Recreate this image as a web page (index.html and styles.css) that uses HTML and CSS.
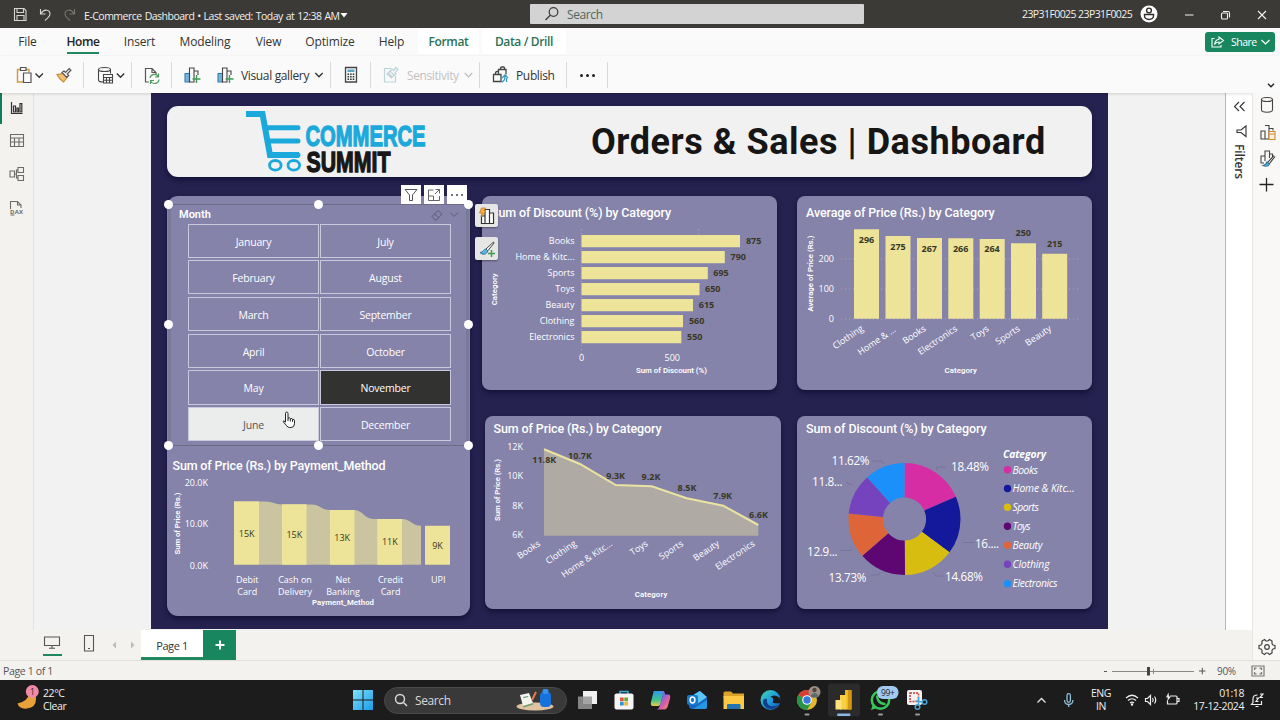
FILE: index.html
```
<!doctype html>
<html>
<head>
<meta charset="utf-8">
<title>E-Commerce Dashboard</title>
<link rel="stylesheet" href="styles.css">
</head>

<body>
<header class="titlebar">
	<svg class="title-icons" width="84" height="28" viewBox="0 0 84 28">
		<g fill="none" stroke="#d6d5d3" stroke-width="1.1">
			<path d="M14.5 8.5h9.5l2 2v10h-11.5zM17 8.5v4h6.500v-4M17 20.500v-5h7v5"/>
			<path d="M40.500 9v5h5M41 13.500c3-5 9-4 9 .500 0 2-2 4-5 6.500"/>
			<path stroke="#77756f" d="M74.500 9v5h-5M74 13.500c-3-5-9-4-9 .500 0 2 2 4 5 6.500"/>
		</g>
	</svg>
	<span class="doc-name">E-Commerce Dashboard &bull; Last saved: Today at 12:38 AM</span>
	<svg class="doc-caret" width="8" height="5" viewBox="0 0 8 5"><path fill="#fff" d="M.5 0h7L4 4.500z"/></svg>
	<div class="search">
		<svg width="16" height="16" viewBox="0 0 16 16"><g fill="none" stroke="#3b3a37" stroke-width="1.200"><circle cx="9.500" cy="6" r="4.300"/><path d="M6.500 9 1.500 14"/></g></svg>
		<span>Search</span>
	</div>
	<span class="user">23P31F0025 23P31F0025</span>
	<svg class="avatar" width="18" height="18" viewBox="0 0 18 18"><circle cx="9" cy="9" r="8.500" fill="#fff"/><g fill="none" stroke="#2e2d2b" stroke-width="1.400"><circle cx="9" cy="5.500" r="2.400"/><path d="M4.500 9.500h9v1.500c0 2-2 3.500-4.500 3.500s-4.500-1.500-4.500-3.500z"/></g></svg>
	<svg class="win-buttons" width="90" height="28" viewBox="1180 0 90 28">
		<g fill="none" stroke="#f2f2f2" stroke-width="1.100">
			<path d="M1185 15h8.500M1258 11l8 8M1266 11l-8 8"/>
			<rect x="1221.500" y="13" width="6" height="6" rx="1"/>
			<path d="M1223 11.500h5q1.500 0 1.500 1.500v4.500"/>
		</g>
	</svg>
</header>

<nav class="tabs">
	<span class="tab t-file">File</span>
	<span class="tab t-home active">Home</span>
	<span class="tab t-insert">Insert</span>
	<span class="tab t-model">Modeling</span>
	<span class="tab t-view">View</span>
	<span class="tab t-opt">Optimize</span>
	<span class="tab t-help">Help</span>
	<span class="tab t-format context">Format</span>
	<span class="tab t-data context">Data / Drill</span>
	<button class="share">
		<svg width="14" height="12" viewBox="0 0 14 12"><path fill="none" stroke="#fff" stroke-width="1.100" d="M3.500 2.500h-2.500v8.500h9v-2M8 1l4.500 3.500L8 8V6C5.500 6 4.500 7 3.500 8.500 4 5 5.500 3.500 8 3.200z"/></svg>
		<span>Share</span>
		<svg width="9" height="6" viewBox="0 0 9 6"><path fill="none" stroke="#fff" stroke-width="1.200" d="M.5 1l4 4 4-4"/></svg>
	</button>
</nav>

<div class="tools">
	<div class="tool w-clip">
		<svg width="68" height="24" viewBox="12 63 68 24">
			<g fill="none" stroke-width="1.200">
				<path stroke="#d49a45" stroke-width="1.500" d="M20.500 69.500h-3v12.500h5.500M26 69.500h3v3"/>
				<path stroke="#555" d="M20.500 67.500h5.500v3h-5.500zM23.500 73h7.500v9.500h-7.500z"/>
				<path stroke="#333" stroke-width="1.400" d="M35.500 73.500l3.700 3.700 3.700-3.700"/>
				<path fill="#f3c272" stroke="#c98c37" d="M57 74.500q3.500 0 6-1.500l4 4.500-3.500 4.500q-4-2.500-6.500-7.500z"/>
				<path stroke="#555" fill="#fafafa" d="M62 72.500l2-1.500 1.500 1.500 3.700-4 1.700 1.700-3.700 3.800 1.500 1.500-2 2z"/>
			</g>
		</svg>
	</div>
	<div class="tool w-data">
		<svg width="32" height="24" viewBox="95 63 32 24">
			<g fill="none" stroke="#444" stroke-width="1.100">
				<ellipse cx="104.500" cy="69.500" rx="6" ry="2"/>
				<path d="M98.500 69.500v10.500c0 1 2 2 4.500 2M110.500 69.500v4"/>
				<path fill="#fafafa" d="M103.500 74.500h9v8.500h-9zM103.500 77.500h9M106.500 77.500v5.500M109.500 77.500v5.500M103.500 80.200h9"/>
				<path stroke="#333" stroke-width="1.400" d="M116.800 73.500l3.700 3.700 3.700-3.700"/>
			</g>
		</svg>
	</div>
	<div class="tool w-refresh">
		<svg width="20" height="24" viewBox="142 63 20 24">
			<g fill="none" stroke-width="1.200">
				<path stroke="#555" d="M149 82h-3.500v-13.500h6.500l4 4v2M152 68.500v4h4"/>
				<path stroke="#4a9b5c" d="M150 78a4.500 4.500 0 0 1 8.500-1M158.500 73.500v3.500h-3.500M159 79.500a4.500 4.500 0 0 1-8.500 1.500M150.500 84v-3.500h3.500"/>
			</g>
		</svg>
	</div>
	<div class="tool w-visual">
		<svg class="chart-add" width="20" height="24" viewBox="182 63 20 24">
			<g fill="none" stroke="#444" stroke-width="1.100">
				<path fill="#73b5e0" stroke="#3a7ca8" d="M185 73.500h4.500v8.500h-4.500z"/>
				<path d="M189.500 68h4.500v14h-4.500zM194 71h4v4"/>
				<path stroke="#3f9b50" stroke-width="1.400" d="M196.500 75v8M192.500 79h8"/>
			</g>
		</svg>
		<svg class="chart-add" width="20" height="24" viewBox="182 63 20 24">
			<g fill="none" stroke="#444" stroke-width="1.100">
				<path fill="#73b5e0" stroke="#3a7ca8" d="M185 73.500h4.500v8.500h-4.500z"/>
				<path d="M189.500 68h4.500v14h-4.500zM194 71h4v4"/>
				<path stroke="#3f9b50" stroke-width="1.400" d="M196.500 75v8M192.500 79h8"/>
			</g>
		</svg>
		<span class="gallery">Visual gallery</span>
		<svg width="10" height="6" viewBox="0 0 10 6"><path fill="none" stroke="#333" stroke-width="1.400" d="M1.300 1 5 4.700 8.700 1"/></svg>
	</div>
	<div class="tool w-calc">
		<svg width="14" height="18" viewBox="0 0 14 18"><path fill="#f5f9fb" stroke="#444" stroke-width="1.300" d="M1.500 1.500h11v14.500h-11z"/><path fill="#5ba5c4" d="M3.500 3.500h7v2.500h-7z"/><path stroke="#333" stroke-width="1.600" stroke-dasharray="1.600 1" d="M3.500 8.200h7.500M3.500 10.800h7.500M3.500 13.300h7.500"/></svg>
	</div>
	<div class="tool w-sens">
		<svg width="16" height="18" viewBox="0 0 16 18"><path fill="none" stroke="#bcd3da" stroke-width="1.200" d="M8 2.500H1.500v13.500h11v-6M4 8l3-3 4 4-2.500 3zM7 5l2-2 1.500 1.500L13 1.500 15 3.500 12 6.500 13 8l-2 1.500M5.500 7l3.500 4"/></svg>
		<span>Sensitivity</span>
		<svg width="9" height="6" viewBox="0 0 9 6"><path fill="none" stroke="#bdbdbd" stroke-width="1.200" d="M.7 1l3.800 3.800L8.300 1"/></svg>
	</div>
	<div class="tool w-publish">
		<svg width="17" height="18" viewBox="0 0 17 18"><g fill="none" stroke="#444" stroke-width="1.300"><path d="M1.500 8.500h7.500v7h-7.500zM3.500 8.500v-1.500q0-1.500 1.500-1.500h1M6.500 8v-4.500h7.500v5M8.500 3.500v-1.500q0-1 1.500-1h1.500q1 0 1 1v1.500"/><path stroke="#3a9bbd" d="M9.500 16c2.500-.5 3.500-3 3.500-6M10 12l3-3 3 3M14.500 12v4"/></g></svg>
		<span>Publish</span>
	</div>
	<div class="tool w-more"><i></i><i></i><i></i></div>
	<svg class="collapse" width="8" height="5" viewBox="0 0 8 5"><path fill="none" stroke="#222" stroke-width="1.400" d="M1 .7l3 3 3-3"/></svg>
</div>

<main class="workspace">
	<aside class="views">
		<svg width="33" height="137" viewBox="0 93 33 137">
			<path fill="#117d5c" d="M0 93h2v31H0z"/>
			<g fill="none" stroke="#333" stroke-width="1.200"><path d="M11.500 102v11.500h11M13.500 112v-6h2v6zM17 112v-4h1.500v4zM20 112v-8.500h1.800v8.500z"/></g>
			<g fill="none" stroke="#6d6b68" stroke-width="1.100">
				<path d="M10.500 134.500h13v12h-13zM10.500 138h13M10.500 142h13M14.500 138v8.500M19 138v8.500"/>
				<path d="M10 171h4.500v6H10zM18 167.500h5.500v5H18zM18 175.500h5.500v5H18zM14.500 174h2M18 170h-1.500v8H18"/>
				<path d="M10.500 209v-7.500h7l3.500 3.500v3M17.500 201.500V205h3.500M10.500 215h4"/>
			</g>
			<text class="dax" x="10" y="213.500" textLength="13">DAX</text>
		</svg>
	</aside>

	<div class="canvas">
		<div class="report">
			<div class="banner">
				<svg class="logo" width="184" height="66" viewBox="244 109 184 66">
					<g fill="none" stroke="#1ba9dc">
						<path stroke-width="6" d="M246 114h16.500l7.500 41h29"/>
						<path stroke-width="5" stroke-linecap="round" d="M268 127.700h30M269 141h29M271 155h27"/>
						<g stroke-width="2.800"><ellipse cx="275.300" cy="165.300" rx="5.800" ry="4.800"/><ellipse cx="293.800" cy="165.300" rx="5.800" ry="4.800"/></g>
					</g>
					<text class="logo-word blue" x="305.500" y="145.500" textLength="120" lengthAdjust="spacingAndGlyphs">COMMERCE</text>
					<text class="logo-word" x="306.500" y="171.500" textLength="84" lengthAdjust="spacingAndGlyphs">SUMMIT</text>
				</svg>
				<h1>Orders &amp; Sales | Dashboard</h1>
			</div>

			<div class="board">
				<section class="card card-left">
					<div class="slicer">
						<div class="slicer-head">
							<span>Month</span>
							<svg width="28" height="12" viewBox="0 0 28 12"><path fill="none" stroke="#5f5d78" d="M1 7.500 7 1.500l4 3.500-5.500 6H4zM3.500 5l4.500 4M19 3.500l4 4 4-4"/></svg>
						</div>
						<div class="months">
							<span>January</span><span>July</span>
							<span>February</span><span>August</span>
							<span>March</span><span>September</span>
							<span>April</span><span>October</span>
							<span>May</span><span class="selected">November</span>
							<span class="hover">June</span><span>December</span>
						</div>
						<i class="handle nw"></i><i class="handle n"></i><i class="handle ne"></i>
						<i class="handle w"></i><i class="handle e"></i>
						<i class="handle sw"></i><i class="handle s"></i><i class="handle se"></i>
						<div class="visual-header">
							<span><svg width="14" height="14" viewBox="0 0 14 14"><path fill="none" stroke="#555" d="M1 1.500h12L8.500 7v5.500h-3V7z"/></svg></span>
							<span><svg width="14" height="14" viewBox="0 0 14 14"><path fill="none" stroke="#666" d="M6.500 2H1.500v10.500h11V8M1.500 8h5v4.500M8.500 1.500h4v4M12.500 1.500 8 6"/></svg></span>
							<span><svg width="14" height="14" viewBox="0 0 14 14"><g fill="#444"><circle cx="2" cy="7" r="1"/><circle cx="7" cy="7" r="1"/><circle cx="12" cy="7" r="1"/></g></svg></span>
						</div>
						<div class="float-btns">
							<span><svg width="18" height="18" viewBox="0 0 18 18"><path fill="#fff" stroke="#333" stroke-width="1.200" d="M3.500 9h3.500v7.500H3.500zM7 2.500h4.500v14H7zM11.500 6h4v10.500h-4z"/><path fill="#f6b14a" stroke="#c57b1c" stroke-width=".8" d="M3.500 1h4L6 4h2L3 10l1-4H1.500z"/></svg></span>
							<span><svg width="18" height="18" viewBox="0 0 18 18"><path fill="#fff" stroke="#444" d="M15.500 2 8 9l1.800 1.800L16 3z"/><path fill="#62b4df" stroke="#33779e" d="M8 9C5.500 9 5.500 12.500 2 12.500 4 15 9 15 9.800 10.800z"/><path stroke="#3f9b50" stroke-width="1.500" d="M13.500 10v7M10 13.500h7"/></svg></span>
						</div>
						<svg class="cursor" width="15" height="18" viewBox="0 0 15 18"><path fill="#fff" stroke="#222" d="M4.500 11V2.500q0-1.500 1.200-1.500T7 2.500V7q2-.700 2.300.700 2-.700 2.200.700 2-.500 2 1.300v3q0 3.800-3.500 3.800H8.500q-2 0-3-2L2 10.500q.500-1.500 2.500.500zM7 7v3M9.300 7.700V10.500M11.500 8.500v2.300"/></svg>
					</div>
					<svg class="chart" width="303" height="170" viewBox="167 446 303 170">
						<text class="title" x="172.500" y="470" textLength="213">Sum of Price (Rs.) by Payment_Method</text>
						<g class="label end"><text x="208" y="486.300">20.0K</text><text x="208" y="527">10.0K</text><text x="208" y="568.500">0.0K</text></g>
						<text class="axis" transform="translate(179.500 523.500) rotate(-90)" textLength="62">Sum of Price (Rs.)</text>
						<path fill="#cac4a0" d="M259 501.500h6c8 0 10 3 17 3h24.500h5c8 0 10 5.500 18.500 5.500h24.500c8 0 10 9 19 9h28.500c8 0 10 6.700 19 6.700v39H259z"/>
						<g fill="#ede49a">
							<path d="M234 501.300h25v63.400h-25zM282 504.300h24.500v60.400H282zM330 510h24.500v54.700H330zM377.300 519h24.700v45.700h-24.700zM425 525.700h25v39h-25z"/>
						</g>
						<g class="value thin"><text x="246.700" y="536.500">15K</text><text x="294.300" y="537.800">15K</text><text x="342.200" y="541.300">13K</text><text x="389.800" y="545">11K</text><text x="437.500" y="549.300">9K</text></g>
						<g class="label mid">
							<text x="247.300" y="583">Debit</text><text x="247.300" y="595">Card</text>
							<text x="295" y="583">Cash on</text><text x="295" y="595">Delivery</text>
							<text x="343" y="583">Net</text><text x="343" y="595">Banking</text>
							<text x="390.600" y="583">Credit</text><text x="390.600" y="595">Card</text>
							<text x="438.300" y="583">UPI</text>
						</g>
						<text class="axis" x="343" y="605" textLength="62">Payment_Method</text>
					</svg>
				</section>

				<div class="column col-mid">
					<section class="card top">
						<svg class="chart" width="295" height="194" viewBox="482 196 295 194">
							<text class="title" x="491" y="216.700" textLength="180">Sum of Discount (%) by Category</text>
							<path class="grid" d="M581.500 229v126M698.500 229v7"/>
							<g class="label end">
								<text x="574.500" y="244">Books</text><text x="574.500" y="260">Home &amp; Kitc...</text><text x="574.500" y="276">Sports</text><text x="574.500" y="292">Toys</text><text x="574.500" y="308">Beauty</text><text x="574.500" y="324">Clothing</text><text x="574.500" y="340">Electronics</text>
							</g>
							<path fill="#ede49a" d="M581.500 235H740v12.300H581.500zM581.500 251H724.800v12.300H581.500zM581.500 267H707.800v12.300H581.500zM581.500 283H699.500v12.300H581.500zM581.500 299H693v12.300H581.500zM581.500 315H683v12.300H581.500zM581.500 331H681.300v12.300H581.500z"/>
							<g class="value">
								<text x="753.700" y="244">875</text><text x="738.300" y="260">790</text><text x="721" y="276">695</text><text x="712.800" y="292">650</text><text x="706.500" y="308">615</text><text x="696.700" y="324">560</text><text x="694.800" y="340">550</text>
							</g>
							<g class="label mid"><text x="581.500" y="361">0</text><text x="672.300" y="361">500</text></g>
							<text class="axis" x="671.500" y="373.300" textLength="71">Sum of Discount (%)</text>
							<text class="axis" transform="translate(496.500 289.300) rotate(-90)" textLength="32">Category</text>
						</svg>
					</section>
					<section class="card bottom">
						<svg class="chart" width="296" height="193" viewBox="485 416 296 193">
							<text class="title" x="493.500" y="433.400" textLength="168">Sum of Price (Rs.) by Category</text>
							<g class="label end"><text x="523" y="449.700">12K</text><text x="523" y="479.300">10K</text><text x="523" y="509">8K</text><text x="523" y="538.300">6K</text></g>
							<path fill="#afaaa3" d="M544 449.300 580 464l35.700 21 36 1.300 35 12 36.600 7.400 35 19.300v10.700H544z"/>
							<path fill="none" stroke="#ebe3a0" stroke-width="2" d="M544 449.300 580 464l35.700 21 36 1.300 35 12 36.600 7.400 35 19.300"/>
							<g class="value">
								<text x="544.300" y="462.700">11.8K</text><text x="580" y="459">10.7K</text><text x="615.700" y="479">9.3K</text><text x="651" y="480.200">9.2K</text><text x="687" y="491">8.5K</text><text x="722.700" y="499">7.9K</text><text x="758.500" y="518.200">6.6K</text>
							</g>
							<g class="label end">
								<text transform="translate(541 545) rotate(-34)">Books</text>
								<text transform="translate(577 545) rotate(-34)">Clothing</text>
								<text transform="translate(613 545) rotate(-34)">Home &amp; Kitc...</text>
								<text transform="translate(648.500 545) rotate(-34)">Toys</text>
								<text transform="translate(684 545) rotate(-34)">Sports</text>
								<text transform="translate(720 545) rotate(-34)">Beauty</text>
								<text transform="translate(755.500 545) rotate(-34)">Electronics</text>
							</g>
							<text class="axis" x="651" y="597.300" textLength="32.500">Category</text>
							<text class="axis" transform="translate(500 490) rotate(-90)" textLength="62">Sum of Price (Rs.)</text>
						</svg>
					</section>
				</div>

				<div class="column col-right">
					<section class="card top">
						<svg class="chart" width="295" height="194" viewBox="797 196 295 194">
							<text class="title" x="806" y="216.700" textLength="188.500">Average of Price (Rs.) by Category</text>
							<path class="grid" d="M841 259h238M841 289h238M841 319h238"/>
							<g class="label end"><text x="834" y="261.700">200</text><text x="834" y="292.300">100</text><text x="834" y="322.300">0</text></g>
							<path fill="#ede49a" d="M854 229.300h25v89.400h-25zM885.500 236h25v82.700h-25zM917 238h25v80.700h-25zM948.300 238.300h25v80.400h-25zM979.700 239h25v79.700h-25zM1011 243.300h25v75.400h-25zM1042.200 253.700h25v65h-25z"/>
							<g class="value">
								<text x="866.500" y="243">296</text><text x="898" y="249.500">275</text><text x="929.300" y="251.500">267</text><text x="960.700" y="252">266</text><text x="992" y="252">264</text><text x="1023.300" y="236.200">250</text><text x="1054.700" y="246.700">215</text>
							</g>
							<g class="label end">
								<text transform="translate(864 330) rotate(-34)">Clothing</text>
								<text transform="translate(896.500 331) rotate(-34)">Home &amp; ...</text>
								<text transform="translate(926.500 330) rotate(-34)">Books</text>
								<text transform="translate(958 330) rotate(-34)">Electronics</text>
								<text transform="translate(989.500 330) rotate(-34)">Toys</text>
								<text transform="translate(1020.500 330) rotate(-34)">Sports</text>
								<text transform="translate(1052 330) rotate(-34)">Beauty</text>
							</g>
							<text class="axis" x="960.700" y="373" textLength="32.500">Category</text>
							<text class="axis" transform="translate(812.700 273.500) rotate(-90)" textLength="76">Average of Price (Rs.)</text>
						</svg>
					</section>
					<section class="card bottom">
						<svg class="chart" width="295" height="193" viewBox="797 416 295 193">
							<text class="title" x="806" y="433.400" textLength="180.500">Sum of Discount (%) by Category</text>
							<g class="donut" transform="rotate(-90 904.500 519)">
								<circle cx="904.500" cy="519" r="38.800" pathLength="100" stroke="#d62da4" stroke-dasharray="18.480 81.520"/>
								<circle cx="904.500" cy="519" r="38.800" pathLength="100" stroke="#14199b" stroke-dasharray="16.680 83.320" stroke-dashoffset="-18.480"/>
								<circle cx="904.500" cy="519" r="38.800" pathLength="100" stroke="#d6bd10" stroke-dasharray="14.680 85.320" stroke-dashoffset="-35.160"/>
								<circle cx="904.500" cy="519" r="38.800" pathLength="100" stroke="#5e0671" stroke-dasharray="13.730 86.270" stroke-dashoffset="-49.840"/>
								<circle cx="904.500" cy="519" r="38.800" pathLength="100" stroke="#dd6538" stroke-dasharray="12.990 87.010" stroke-dashoffset="-63.570"/>
								<circle cx="904.500" cy="519" r="38.800" pathLength="100" stroke="#7443bd" stroke-dasharray="11.830 88.170" stroke-dashoffset="-76.560"/>
								<circle cx="904.500" cy="519" r="38.800" pathLength="100" stroke="#1b8ffa" stroke-dasharray="11.620 88.380" stroke-dashoffset="-88.390"/>
							</g>
							<path fill="none" stroke="#77759a" d="M936.500 470v-3h9M963 542.500h12M933 572l3 4h7M871 575h8l1-3M840 550.500h11v-3M846 482l6 3M872 461h10l2 3"/>
							<g class="percent">
								<text x="951" y="471.200" textLength="38">18.48%</text>
								<text x="975" y="547.700" textLength="24">16....</text>
								<text x="945" y="580.700" textLength="38">14.68%</text>
								<text x="828.500" y="581.700" textLength="38">13.73%</text>
								<text x="807" y="555.500" textLength="30.500">12.9...</text>
								<text x="812" y="486" textLength="30.500">11.8...</text>
								<text x="831.500" y="465" textLength="38">11.62%</text>
							</g>
							<text class="legend bold" x="1003" y="457.500" textLength="43">Category</text>
							<circle cx="1007.500" cy="469.700" r="3.700" fill="#d62da4"/><circle cx="1007.500" cy="488.500" r="3.700" fill="#14199b"/><circle cx="1007.500" cy="507.200" r="3.700" fill="#d6bd10"/><circle cx="1007.500" cy="526.300" r="3.700" fill="#5e0671"/><circle cx="1007.500" cy="545.300" r="3.700" fill="#dd6538"/><circle cx="1007.500" cy="564.300" r="3.700" fill="#7443bd"/><circle cx="1007.500" cy="583.700" r="3.700" fill="#1b8ffa"/>
							<g class="legend">
								<text x="1012.500" y="473.500" textLength="25.500">Books</text>
								<text x="1012.500" y="492.300" textLength="62">Home &amp; Kitc...</text>
								<text x="1012.500" y="511" textLength="26.500">Sports</text>
								<text x="1012.500" y="530" textLength="18">Toys</text>
								<text x="1012.500" y="549" textLength="30">Beauty</text>
								<text x="1012.500" y="568" textLength="37">Clothing</text>
								<text x="1012.500" y="587.400" textLength="45">Electronics</text>
							</g>
						</svg>
					</section>
				</div>
			</div>
		</div>
	</div>

	<aside class="filters">
		<svg width="14" height="45" viewBox="1233 99 14 45"><g fill="none" stroke="#333" stroke-width="1.100"><path d="M1239 102l-4.500 4.500 4.500 4.500M1244.500 102l-4.500 4.500 4.500 4.500M1246 126v10.500l-5-4h-4v-2.500h4z"/></g></svg>
		<span>Filters</span>
	</aside>
	<aside class="rail">
		<svg width="27" height="110" viewBox="1253 93 27 110">
			<g fill="none" stroke="#444" stroke-width="1.100">
				<ellipse cx="1267" cy="99.500" rx="5.500" ry="2"/><path d="M1261.500 99.500v10.500c0 1.300 2.500 2.200 5.500 2.200s5.500-.900 5.500-2.200v-10.500"/>
				<path d="M1261 131h4v8h-4zM1265 125.500h4v13.500h-4M1269 128.500h4v2"/>
				<path fill="#fdf0dc" stroke="#d08a35" d="M1269 131.500h6v8h-6zM1269 134h6"/>
				<path d="M1264 163h-3v-7h4v5M1265 156v-5h4.500v7M1269.500 154h3v3"/>
				<path fill="#62b4df" stroke="#33779e" d="M1263 165.500q3-.500 4-3.500l2.500 2q-2 3.500-6.500 1.500z"/><path stroke="#333" d="M1268 162l6-6.500M1269.500 163.500l5.500-7"/>
				<path stroke="#222" stroke-width="1.300" d="M1266.500 178v13.500M1259.500 184.500h14"/>
			</g>
		</svg>
		<svg class="gear" width="18" height="18" viewBox="0 0 18 18"><g fill="none" stroke="#444" stroke-width="1.200"><path d="M6.500 1.500 8 3h2l1.500-1.500 2.500 1.500v2.500L15 7l2 .500v3L15 11l-1 1.500V15l-2.500 1.500L10 15H8l-1.500 1.500L4 15v-2.500L3 11l-2-.500v-3L3 7l1-1.500V3z"/><circle cx="9" cy="9" r="2.300"/></g></svg>
	</aside>
</main>

<div class="pagebar">
	<svg width="107" height="30" viewBox="33 630 107 30">
		<g fill="none" stroke="#555" stroke-width="1.100"><path d="M44.500 637h15v8.500h-15zM52 645.500v2.500M49 648.200h6M84.500 635.500h9v15.500h-9zM88 648.500h2"/></g>
		<path fill="#20875f" d="M43 654h19v2H43z"/><path fill="#bdbbb8" d="M116 641.500v7l-3.500-3.500zM131 641.500v7l3.500-3.500z"/>
	</svg>
	<span class="page-tab">Page 1</span>
	<span class="page-add"><svg width="10" height="10" viewBox="0 0 10 10"><path stroke="#fff" stroke-width="2" d="M5 .5v9M.5 5h9"/></svg></span>
</div>

<div class="status">
	<span class="page-count">Page 1 of 1</span>
	<svg width="108" height="12" viewBox="1102 664 108 12"><g stroke="#555"><path d="M1104 670.500h3M1199 670h6.500M1202.300 666.800v6.500"/><path stroke="#888" d="M1112 670.500h82M1153.500 668v5"/><path stroke="#444" stroke-width="3" d="M1148.500 666v8.500"/></g></svg>
	<span class="zoom">90%</span>
	<svg width="14" height="12" viewBox="0 0 14 12"><path fill="none" stroke="#777" stroke-width="1.200" d="M1 1h12v10H1zM3.500 5V3.200H5.500M8.500 3.200h2V5M10.500 7v1.800h-2M5.500 8.800h-2V7"/></svg>
</div>

<footer class="taskbar">
	<svg class="moon" width="24" height="26" viewBox="16 684 24 26"><path fill="#e9a13a" d="M29 694q-1 7-11.500 9.500 2 6 9.500 5 9-1 9-9.500 0-4-2.500-6z"/><circle cx="32.300" cy="691.500" r="6.500" fill="#ee8ba5"/><text class="badge" x="32.300" y="695">1</text></svg>
	<div class="weather"><span>22°C</span><span>Clear</span></div>
	<svg class="windows" width="20" height="20" viewBox="0 0 20 20"><defs><linearGradient id="win" x2="1" y2="1"><stop stop-color="#7fe0fb"/><stop offset="1" stop-color="#1a9be8"/></linearGradient></defs><path fill="url(#win)" d="M0 0h9.500v9.500H0zM10.500 0H20v9.500h-9.500zM0 10.500h9.500V20H0zM10.500 10.500H20V20h-9.500z"/></svg>
	<div class="task-search">
		<svg width="14" height="14" viewBox="0 0 14 14"><g fill="none" stroke="#ddd" stroke-width="1.400"><circle cx="6" cy="6" r="4.500"/><path d="M9.500 9.500 13 13"/></g></svg>
		<span>Search</span>
		<svg class="books" width="38" height="22" viewBox="0 0 38 22"><ellipse cx="19" cy="17.500" rx="18.500" ry="4" fill="#e0c3a0"/><path fill="#f4f4ef" d="M4 6l9-2 4 10-10 3z"/><path fill="#6f9a77" d="M7 17l10-3 .5 1.500-10 3zM7 8l5-1 .5 1-5 1.200z"/><path stroke="#e57d4d" stroke-width="2" d="M20 3l-4 8"/><rect x="24" y="3" width="11" height="15" rx="4" fill="#1673dc"/><rect x="26.500" y="0" width="6" height="5" rx="2" fill="#3192f4"/></svg>
	</div>
	<svg class="apps" width="358" height="40" viewBox="574 680 358 40">
		<defs>
			<linearGradient id="edge" x2="1" y2="1"><stop stop-color="#46d6a4"/><stop offset=".5" stop-color="#1f9ede"/><stop offset="1" stop-color="#1455b4"/></linearGradient>
			<linearGradient id="cop" x2="1" y2="1"><stop stop-color="#35a6f5"/><stop offset=".35" stop-color="#7c62e6"/><stop offset=".65" stop-color="#e0619f"/><stop offset="1" stop-color="#f5a047"/></linearGradient>
			<linearGradient id="cop2" y2="1" x2="0"><stop stop-color="#2a9be8"/><stop offset=".6" stop-color="#42c38a"/><stop offset="1" stop-color="#eccb4c"/></linearGradient>
		</defs>
		<path fill="#858585" d="M578 696.500h14v12.500h-14z"/><path fill="#f1f1f1" d="M583 691h14v13h-14z"/><path fill="#a5a5a5" d="M583 696.500h9v7.500h-9z"/>
		<path fill="none" stroke="#39aee0" stroke-width="1.500" d="M620 694v-2.500h8v2.500"/><rect x="614.500" y="693.500" width="19" height="16" rx="2" fill="#f5f5f5"/>
		<path fill="#e5533c" d="M620 697.500h3.700v3.700H620z"/><path fill="#65a843" d="M624.300 697.500h3.700v3.700h-3.700z"/><path fill="#2c93dc" d="M620 701.800h3.700v3.700H620z"/><path fill="#f0b72f" d="M624.300 701.800h3.700v3.700h-3.700z"/>
		<path fill="url(#cop2)" d="M654 691h8q2 0 1.500 2l-3 11q-.700 2-2.500 2h-5q-3 0-2-4l2-8q.5-3 1-3z"/><path fill="url(#cop)" d="M664 694.500h4q3 0 2 4l-2 7q-1 4-4 4h-7q2-1 2.500-3l3-10q.500-2 1.500-2zM659 691h5l1.500 4H663q-2-4-4-4z"/>
		<path fill="#1668c3" d="M689 698l10-7 8 7v9q0 2-2 2h-13q-2 0-3-2z"/><path fill="#5ac8f5" d="M694 694.500l6-3.500 7 6-10 7z"/><path fill="#2696e2" d="M693 709l14-9v7q0 2-2 2z"/><rect x="687" y="695" width="11" height="10" rx="2" fill="#1479d2"/><ellipse cx="692.500" cy="700" rx="2.400" ry="2.900" fill="none" stroke="#fff" stroke-width="1.500"/>
		<path fill="#dca128" d="M723.500 693q0-1.500 1.500-1.500h6l2 2h11v4h-20.500z"/><path fill="#fbc943" d="M723.500 696h20.500v13h-20.500z"/><path fill="#2373b5" d="M728 704h11.500q1 0 1 1v4H727v-4q0-1 1-1z"/>
		<circle cx="770.500" cy="700" r="10" fill="url(#edge)"/><path fill="#123f87" d="M767 699c-1 7 5 9 11 6-4 7-15 4-15-3 0-3 2-4 4-3z"/><path fill="#1c1c1c" d="M770 697q4 0 3 4-1 2 2 2.300h5.500q1-3-.500-5-5-5-10-1.300z"/>
		<circle cx="807" cy="700" r="10" fill="#e2b82e"/><path fill="#d93e32" d="M807 700l-8.700-5A10 10 0 0 1 815.700 695z"/><path fill="#2b9348" d="M807 700l-8.700-5A10 10 0 0 0 807 710l4.300-7.500z"/><circle cx="807" cy="700" r="4.800" fill="#fff"/><circle cx="807" cy="700" r="3.700" fill="#3579dc"/><circle cx="814.500" cy="692" r="6" fill="#9c9086"/><circle cx="814.500" cy="690" r="2.200" fill="#51433b"/><path fill="#5d6871" d="M810.500 696q4-6 8 0-4 3-8 0z"/>
		<rect x="828" y="683.500" width="32" height="33" rx="3" fill="#2b2b2b"/><path fill="#f0bb1b" d="M845 690h6.500v19.500H845z"/><path fill="#d29612" d="M848 690h3.500v19.500H848z"/><path fill="#f7d045" d="M840 695h6.500v14.500H840z"/><path fill="#fbe27a" d="M835.500 700h6v9.500h-6z"/><rect x="837" y="713.500" width="13.500" height="2.500" rx="1.200" fill="#8bb8e4"/>
		<circle cx="880.500" cy="700" r="8.700" fill="#18191a" stroke="#39c65a" stroke-width="2.500"/><path fill="#39c65a" d="M871 710l2-6 4 4z"/><path fill="none" stroke="#39c65a" stroke-width="2.400" stroke-linecap="round" d="M877 696.500c.500 4 3 7 7.500 7.500"/><rect x="877" y="686" width="21.500" height="13" rx="6" fill="#a2caf0"/><text class="badge" x="887.700" y="696">99+</text>
		<rect x="907" y="690" width="15" height="15" rx="2" fill="#f2f2f2"/><path fill="none" stroke="#ca3d32" stroke-width="1.500" stroke-dasharray="2 1" d="M910 693h8.500v8.500H910z"/><g fill="none" stroke="#4ba6d7" stroke-width="1.500"><circle cx="917.500" cy="707" r="2.300"/><circle cx="924.500" cy="702" r="2.300"/><path d="M918.500 705v-8M922.500 702l-7-1"/></g>
		<g fill="#9a9a9a"><rect x="804.500" y="713.500" width="5" height="2" rx="1"/><rect x="878" y="713.500" width="5" height="2" rx="1"/><rect x="915" y="713.500" width="5" height="2" rx="1"/></g>
	</svg>
	<svg class="tray" width="44" height="20" viewBox="1034 690 44 20"><g fill="none" stroke="#e5e5e5" stroke-width="1.300"><path d="M1037.500 702.500l4-4 4 4"/><path stroke="#8fc0d7" d="M1067 695.500q0-1.800 1.700-1.800t1.700 1.800v5q0 1.800-1.700 1.800t-1.700-1.800zM1064.500 700q0 4.500 4.200 4.500t4.200-4.500M1068.700 704.500v2.500"/></g></svg>
	<div class="lang"><span>ENG</span><span>IN</span></div>
	<svg class="net" width="56" height="20" viewBox="1124 690 56 20"><g fill="none" stroke="#eee" stroke-width="1.200"><path d="M1126 698q6-5.500 12 0M1128 700.500q4-3.500 8 0M1130 703q2-1.800 4 0"/><circle cx="1132" cy="704.500" r=".600" fill="#eee"/><path d="M1145.500 698.500h2l3-3v9l-3-3h-2zM1152.500 698q1.500 2 0 4M1154.500 696.500q2.500 3.500 0 7"/><path d="M1170 696h6q1 0 1 1v6q0 1-1 1h-8.500v-3.500M1177.500 698.500h1.500v3h-1.500"/><path fill="#eee" stroke="none" d="M1168.500 692.500l-2.500 5h2l-1 4 4-5h-2z"/></g></svg>
	<div class="clock"><span>01:18</span><span>17-12-2024</span></div>
	<svg class="bell" width="14" height="15" viewBox="0 0 14 15"><path fill="none" stroke="#eee" stroke-width="1.200" d="M7.500 2Q3 2 3 6v3.500L1.500 11.500h10V8M5.500 13.500h3M6 5h2.500L6 8.500h2.500M10 1h3l-3 3.500h3"/></svg>
</footer>
</body>
</html>
```

FILE: styles.css
```
*{
	margin:0;
	padding:0;
	box-sizing:border-box;
}
body{
	width:1280px;
	height:720px;
	overflow:hidden;
	background:#f3f2ef;
	color:#333;
	font:12px/16px "Open Sans", "Noto Sans", sans-serif;
}
svg{
	display:block;
	flex:none;
}
i{ display:block; }
span{ white-space:nowrap; }

/* title bar */
.titlebar{
	display:flex;
	align-items:center;
	height:28px;
	background:#3b3a37;
	color:#f1f0ee;
}
.doc-name{
	width:251px;
	padding-top:4px;
	font-size:10.5px;
	letter-spacing:-.5px;
	word-spacing:.7px;
}
.doc-caret{ margin:3px 0 0 5px; }
.search{
	display:flex;
	align-items:center;
	gap:7px;
	width:334px;
	height:20px;
	margin-left:182px;
	padding-left:14px;
	background:#d3d3d3;
	color:#4f6660;
	border-radius:1px;
}
.search span{ padding-top:1px; letter-spacing:-.4px; }
.user{
	width:112px;
	margin-left:158px;
	font-size:10.5px;
	letter-spacing:-.58px;
}
.avatar{ margin-left:6px; }
.win-buttons{ margin-left:22px; }

/* ribbon */
.tabs{
	display:flex;
	height:28px;
	background:#fafafa;
}
.tab{
	height:28px;
	padding-top:6px;
	text-align:center;
	letter-spacing:-.15px;
}
.tab.active{
	font-weight:600;
	color:#222;
	letter-spacing:-.45px;
}
.tab.active:after{
	content:"";
	display:block;
	width:32px;
	height:2px;
	margin:2px auto 0;
	background:#20875f;
}
.tab.context{
	height:26px;
	background:#fff;
	color:#2b7256;
	font-weight:600;
	letter-spacing:-.35px;
}
.t-file{ width:55px; }
.t-home{ width:56px; }
.t-insert{ width:57px; }
.t-model{ width:74px; }
.t-view{ width:53px; }
.t-opt{ width:70px; }
.t-help{ width:53px; }
.t-format{ width:61px; margin-right:3px; }
.t-data{ width:84px; }
.share{
	display:flex;
	align-items:center;
	gap:6px;
	width:70px;
	height:20px;
	margin:4px 0 0 639px;
	padding-left:6px;
	border:0;
	border-radius:3px;
	background:#18865f;
	color:#fff;
	font:10.5px "Open Sans", sans-serif;
	letter-spacing:-.5px;
}
.share span{ width:25px; }
.share svg:last-child{ margin-left:-1px; }
.tools{
	display:flex;
	height:37px;
	padding-top:6px;
	background:#fafafa;
	box-shadow:0 1px 3px rgba(0,0,0,.14);
	position:relative;
}
.tool{
	display:flex;
	align-items:center;
	height:26px;
	border-right:1px solid #dad9d8;
}
.tool span{ padding-top:1px; }
.w-clip{ width:84px; padding-left:12px; }
.w-data{ width:48px; padding-left:11px; }
.w-refresh{ width:40px; padding-left:10px; }
.w-visual{ width:159px; padding-left:10px; }
.chart-add + .chart-add{ margin-left:13px; }
.gallery{
	width:69px;
	margin:0 4px 0 6px;
	letter-spacing:-.35px;
}
.w-calc{ width:40px; justify-content:center; }
.w-sens{
	width:109px;
	padding-left:12px;
	color:#c2c2c2;
}
.w-sens span{
	width:53px;
	margin:0 4px 0 8px;
	letter-spacing:-.4px;
}
.w-publish{ width:87px; padding-left:12px; }
.w-publish span{ margin-left:7px; letter-spacing:-.35px; }
.w-more{
	width:41px;
	gap:3px;
	justify-content:center;
}
.w-more i{
	width:3px;
	height:3px;
	border-radius:50%;
	background:#222;
}
.collapse{ margin:21px 0 0 659px; }

/* workspace */
.workspace{
	display:flex;
	height:537px;
}
.views{
	width:34px;
	background:#f3f2ef;
	border-right:1px solid #e3e2df;
}
.dax{
	font:bold 6px "Open Sans", sans-serif;
	fill:#6d6b68;
}
.canvas{
	width:1191px;
	padding-left:117px;
	background:#f2f2f2;
}
.report{
	width:957px;
	height:536px;
	padding:13px 16px 0;
	background:#252250;
}
.banner{
	display:flex;
	height:71px;
	width:925px;
	padding:3px 0 0 77px;
	border-radius:11px;
	background:#f1f1f1;
	box-shadow:0 3px 5px #141238;
}
h1{
	margin:7px 0 0 163px;
	font:bold 36px/52px Roboto, sans-serif;
	letter-spacing:.54px;
	color:#161616;
	white-space:nowrap;
}
.logo{ overflow:visible; }
.logo-word{
	font:bold 29px "Liberation Sans Narrow", "Liberation Sans", sans-serif;
	fill:#171717;
	stroke:#171717;
	stroke-width:1.3px;
}
.logo-word.blue{
	fill:#1ba9dc;
	stroke:#1ba9dc;
}
.board{
	display:flex;
	align-items:flex-start;
	padding-top:19px;
}
.card{
	border-radius:8px;
	background:#8583aa;
	box-shadow:0 3px 5px #141238;
}
.card-left{
	width:303px;
	height:420px;
	padding-top:8px;
	border-radius:11px;
}
.column{
	display:flex;
	flex-direction:column;
}
.column .top{ width:295px; height:194px; margin-bottom:26px; }
.column .bottom{ width:295px; height:193px; }
.col-mid{ margin-left:12px; }
.col-mid .bottom{ width:296px; margin-left:3px; }
.col-right{ margin-left:16px; }

/* month slicer */
.slicer{
	position:relative;
	width:301px;
	height:242px;
	margin-left:1px;
	border:1px solid #6d6b86;
	border-left:3px solid #7a7997;
	border-right:3px solid #7a7997;
}
.slicer-head{
	display:flex;
	justify-content:space-between;
	height:18.500px;
	padding:2px 7px 0 8px;
	color:#fff;
	font:600 11px/16px Roboto, sans-serif;
}
.slicer-head svg{ margin-top:2px; }
.months{
	display:grid;
	grid-template-columns:131px 131px;
	grid-auto-rows:34.300px;
	gap:2.400px 1px;
	padding-left:17px;
}
.months span{
	border:1px solid #c9c8dc;
	color:#fff;
	font-size:10.500px;
	line-height:34px;
	letter-spacing:-.2px;
	text-align:center;
}
.months .selected{ background:#323231; }
.months .hover{ background:#ebecec; color:#555; }
.handle{
	position:absolute;
	width:9px;
	height:9px;
	border-radius:50%;
	background:#fff;
}
.nw, .n, .ne{ top:-5px; }
.w, .e{ top:115px; }
.sw, .s, .se{ bottom:-5px; }
.nw, .w, .sw{ left:-7px; }
.n, .s{ left:143px; }
.ne, .e, .se{ right:-7px; }
.visual-header{
	position:absolute;
	top:-20px;
	left:230px;
	display:flex;
	gap:3px;
}
.visual-header span{
	display:flex;
	align-items:center;
	justify-content:center;
	width:20px;
	height:19px;
	background:#fff;
}
.float-btns{
	position:absolute;
	z-index:2;
	top:-1px;
	left:304px;
	display:flex;
	flex-direction:column;
	gap:10px;
}
.float-btns span{
	display:flex;
	align-items:center;
	justify-content:center;
	width:23px;
	height:23px;
	border-radius:2px;
	background:#e6e6e4;
	box-shadow:0 1px 2px rgba(0,0,0,.4);
}
.cursor{
	position:absolute;
	left:110px;
	top:206px;
}

/* charts */
.title{
	font:500 12.500px Roboto, sans-serif;
	fill:#fff;
}
.axis{
	font:600 7.800px Roboto, sans-serif;
	fill:#fff;
	text-anchor:middle;
}
.label{
	font:9px "Open Sans", sans-serif;
	fill:#fff;
}
.end{ text-anchor:end; }
.mid{ text-anchor:middle; }
.value{
	font:bold 9px "Open Sans", sans-serif;
	fill:#3a3723;
	text-anchor:middle;
}
.value.thin{ font-weight:normal; }
.grid{
	fill:none;
	stroke:#a9a7c3;
	stroke-dasharray:1 3;
}
.donut circle{
	fill:none;
	stroke-width:34.400px;
}
.percent{
	font:11.700px "Open Sans", sans-serif;
	fill:#fff;
}
.legend{
	font:italic 10.300px "Open Sans", sans-serif;
	fill:#fff;
}
.legend.bold{ font-weight:bold; }

/* right panes */
.filters{
	width:27px;
	padding:6px 0 0 7px;
	background:#fff;
	border-left:1px solid #b9b8b6;
}
.filters span{
	display:block;
	writing-mode:vertical-rl;
	font-weight:600;
	line-height:12px;
	letter-spacing:-.1px;
}
.rail{
	width:28px;
	height:567px;
	display:flex;
	flex-direction:column;
	justify-content:space-between;
	padding-bottom:4px;
	background:#f9f8f6;
	border-left:1px solid #e6e5e2;
	z-index:1;
}
.gear{ margin-left:5px; }

/* page tabs and status */
.pagebar{
	display:flex;
	height:30px;
	padding-left:33px;
}
.page-tab{
	width:62px;
	height:30px;
	margin-left:1px;
	background:#fff;
	border-bottom:3px solid #20875f;
	text-align:center;
	font-size:11px;
	line-height:31px;
	letter-spacing:-.4px;
}
.page-add{
	display:flex;
	align-items:center;
	justify-content:center;
	width:33px;
	height:30px;
	background:#18865f;
}
.status{
	display:flex;
	align-items:center;
	height:20px;
	padding-left:3px;
	border-top:1px solid #e0dfdc;
	font-size:10.500px;
	color:#555;
}
.page-count{
	width:1099px;
	letter-spacing:-.35px;
}
.zoom{
	width:35px;
	padding-left:7px;
	margin-right:6px;
	font-size:10px;
	letter-spacing:-.3px;
}

/* taskbar */
.taskbar{
	display:flex;
	align-items:center;
	height:40px;
	background:#1c1c1c;
	color:#f0f0f0;
	font-size:10.500px;
	line-height:13px;
	letter-spacing:-.4px;
}
.taskbar div:not(.task-search){
	display:flex;
	flex-direction:column;
}
.moon{ margin:-6px 0 0 16px; }
.weather{ width:313px; padding-left:3px; }
.task-search{
	display:flex;
	align-items:center;
	width:183px;
	height:27px;
	margin-left:11px;
	padding-left:9px;
	border:1px solid #4a4a4a;
	border-radius:14px;
	background:#393939;
	color:#d8d8d8;
	font-size:12px;
}
.task-search span{ width:108px; padding-left:7px; }
.apps{ margin-left:7px; }
.tray{ margin-left:102px; }
.lang{ width:46px; align-items:center; }
.clock{ width:64px; align-items:flex-end; }
.bell{ margin-left:6px; }
.badge{
	font:8.500px "Open Sans", sans-serif;
	fill:#25262c;
	text-anchor:middle;
}
```
